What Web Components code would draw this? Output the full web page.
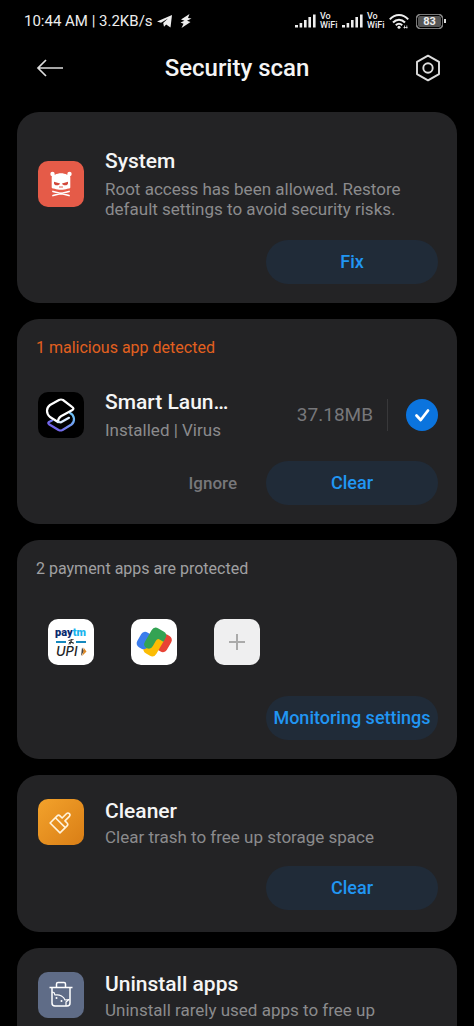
<!DOCTYPE html>
<html lang="en">
<head>
<meta charset="utf-8">
<meta name="viewport" content="width=device-width, initial-scale=1">
<title>Security scan</title>
<style>
    html, body {
        margin: 0;
        background: #000;
    }

    body {
        font-family: Roboto, "Noto Sans", sans-serif;
        color: #f5f5f5;
        --card: #232325;
        --muted: #8b8b8d;
        --dim: #77777a;
        --accent: #2196f3;
        --pill: #202b38;
        --warn: #e2601f;
    }
</style>
</head>
<body>

<security-app>
    <status-bar slot="top" time="10:44 AM" speed="3.2KB/s" battery="83"></status-bar>
    <page-header slot="top">Security scan</page-header>

    <scan-card class="roomy">
        <scan-item name="System">
            <app-icon slot="icon" name="root"></app-icon>
            Root access has been allowed. Restore default settings to avoid security risks.
        </scan-item>
        <pill-button slot="actions">Fix</pill-button>
    </scan-card>

    <scan-card heading="1 malicious app detected" class="warn">
        <scan-item name="Smart Laun…">
            <app-icon slot="icon" name="launcher"></app-icon>
            Installed | Virus
            <size-check slot="end" size="37.18MB"></size-check>
        </scan-item>
        <pill-button slot="actions" plain>Ignore</pill-button>
        <pill-button slot="actions">Clear</pill-button>
    </scan-card>

    <scan-card heading="2 payment apps are protected">
        <app-row>
            <app-icon name="paytm"></app-icon>
            <app-icon name="gpay"></app-icon>
            <app-icon name="add"></app-icon>
        </app-row>
        <pill-button slot="actions">Monitoring settings</pill-button>
    </scan-card>

    <scan-card class="compact">
        <scan-item name="Cleaner" compact>
            <app-icon slot="icon" name="cleaner"></app-icon>
            Clear trash to free up storage space
        </scan-item>
        <pill-button slot="actions">Clear</pill-button>
    </scan-card>

    <scan-card class="compact">
        <scan-item name="Uninstall apps" compact>
            <app-icon slot="icon" name="uninstall"></app-icon>
            Uninstall rarely used apps to free up
        </scan-item>
    </scan-card>
</security-app>

<script>
// attach an open root and fill it from a template
function render(el, html) {
    const template = document.createElement('template');
    template.innerHTML = html;
    el.attachShadow({mode: 'open'});
    el.shadowRoot.appendChild(template.content.cloneNode(true));
}

class SecurityApp extends HTMLElement {
    constructor() {
        super();
        render(this, `
            <style>
                :host {
                    display: flex;
                    flex-direction: column;
                    height: 100vh;
                }

                main {
                    flex: 1;
                    min-height: 0;
                    overflow-y: auto;
                    scrollbar-width: none;
                    display: flex;
                    flex-direction: column;
                    gap: 16px;
                    padding: 0 17px;
                }
            </style>
            <slot name="top"></slot>
            <main><slot></slot></main>
        `);
    }
}

const signal = `
    <svg width="21" height="14" viewBox="0 0 21 14" fill="#eee">
        <rect x="0" y="11" width="3" height="2.5"/>
        <rect x="4.6" y="9" width="2.6" height="4.5"/>
        <rect x="9" y="6" width="2.6" height="7.5"/>
        <rect x="13.4" y="3" width="2.6" height="10.5"/>
        <rect x="18" y="0.5" width="2.6" height="13"/>
    </svg>
    <span class="vo"><span>Vo</span><span>WiFi</span></span>
`;

class StatusBar extends HTMLElement {
    constructor() {
        super();
        render(this, `
            <style>
                :host {
                    display: flex;
                    align-items: center;
                    justify-content: space-between;
                    height: 42px;
                    padding: 0 28px 0 24px;
                    font-size: 15px;
                    line-height: 20px;
                    color: #eee;
                }

                div {
                    display: flex;
                    align-items: center;
                }

                .left { gap: 8px; }
                .right { gap: 4px; }
                #clock { margin-right: -4px; }

                .vo {
                    display: flex;
                    flex-direction: column;
                    width: 18px;
                    font-size: 9px;
                    line-height: 9px;
                    font-weight: 500;
                }

                .wifi { margin-right: 3px; }

                #battery {
                    box-sizing: border-box;
                    width: 27px;
                    height: 15px;
                    padding: 1px;
                    border: 1px solid #eee;
                    outline: 1px solid #777;
                    outline-offset: -1px;
                    border-radius: 4px;
                    background: #555 content-box;
                    font-size: 11px;
                    line-height: 12px;
                    font-weight: 700;
                    text-align: center;
                }

                .cap {
                    width: 2px;
                    height: 4px;
                    margin-left: -3px;
                    background: #ddd;
                }
            </style>
            <div class="left">
                <span id="clock"></span>
                <svg width="15" height="13" viewBox="0 0 15 13" fill="#eee">
                    <path d="M0 6.500 15 0l-1.500 12.500-4.300-3.100-2.200 2.300-.8-3.700L11 3.500 4 7.700z"/>
                </svg>
                <svg width="12" height="14" viewBox="0 0 12 14" fill="#eee">
                    <path d="M9.500 0 1 5.500l3.500 1.300L.5 8.500l3 1.300L1.500 14l9-6-3.500-1.200 4.500-2.300-3.500-.5z"/>
                </svg>
            </div>
            <div class="right">
                ${signal}${signal}
                <svg class="wifi" width="20" height="15" viewBox="0 0 20 15" fill="none" stroke="#eee" stroke-width="2">
                    <path d="M.8 5.400C6-.4 14-.4 19.200 5.400M4 8.500c3.500-3.800 8.500-3.800 12 0M6.800 11.300c2-2 4.400-2 6.400 0"/>
                    <circle cx="10" cy="13.300" r="1.500" fill="#eee" stroke="none"/>
                    <path d="M14.500 13.500h4M15.500 11.500v3M17.800 11.500v3" stroke-width=".8"/>
                </svg>
                <span id="battery"></span>
                <span class="cap"></span>
            </div>
        `);
    }

    connectedCallback() {
        this.shadowRoot.querySelector('#clock').textContent =
            this.getAttribute('time') + ' | ' + this.getAttribute('speed');
        this.shadowRoot.querySelector('#battery').textContent = this.getAttribute('battery');
    }
}

class PageHeader extends HTMLElement {
    constructor() {
        super();
        render(this, `
            <style>
                :host {
                    display: grid;
                    grid-template-columns: 32px 1fr 32px;
                    align-items: center;
                    height: 52px;
                    padding: 0 32px 18px;
                }

                h1 {
                    margin: 0;
                    font-size: 24px;
                    line-height: 32px;
                    font-weight: 500;
                    text-align: center;
                }

                button {
                    display: block;
                    padding: 0;
                    border: 0;
                    background: none;
                    cursor: pointer;
                }

                svg { display: block; }
            </style>
            <button aria-label="Back">
                <svg width="32" height="28" viewBox="-4 0 32 28" fill="none" stroke="#ddd" stroke-width="1.700">
                    <path d="M27 14H2M10 6l-8 8 8 8"/>
                </svg>
            </button>
            <h1><slot></slot></h1>
            <button aria-label="Settings">
                <svg width="32" height="28" viewBox="-4 0 32 28" fill="none" stroke="#ddd" stroke-width="1.900" stroke-linejoin="round">
                    <path d="M14 1.700 25 7.900v12.200l-11 6.200-11-6.200V7.900z"/>
                    <circle cx="14" cy="14" r="4.700"/>
                </svg>
            </button>
        `);
    }
}

class ScanCard extends HTMLElement {
    constructor() {
        super();
        render(this, `
            <style>
                :host {
                    display: flex;
                    flex-direction: column;
                    flex-shrink: 0;
                    box-sizing: border-box;
                    border-radius: 22px;
                    background: var(--card);
                    padding: 19px;
                }

                :host(.roomy) { padding-top: 37px; }
                :host(.compact) { padding: 24px 19px 22px; }

                h2 {
                    margin: 0 0 32px;
                    font-size: 16px;
                    line-height: 20px;
                    font-weight: 400;
                    color: #a0a0a2;
                }

                h2:empty { display: none; }
                :host(.warn) h2 { color: var(--warn); }

                footer {
                    display: flex;
                    justify-content: flex-end;
                    gap: 8px;
                    padding-top: 21px;
                }

                :host(.compact) footer { padding-top: 19px; }
            </style>
            <h2></h2>
            <slot></slot>
            <footer><slot name="actions"></slot></footer>
        `);
    }

    connectedCallback() {
        this.shadowRoot.querySelector('h2').textContent = this.getAttribute('heading') || '';
    }
}

class ScanItem extends HTMLElement {
    constructor() {
        super();
        render(this, `
            <style>
                :host {
                    display: flex;
                    align-items: center;
                    gap: 21px;
                    padding-left: 2px;
                }

                :host([compact]) { align-items: flex-start; }

                .text {
                    flex: 1;
                    display: flex;
                    flex-direction: column;
                    gap: 6px;
                }

                :host([compact]) .text { gap: 4px; }

                h3 {
                    margin: 0;
                    font-size: 21px;
                    line-height: 24px;
                    font-weight: 500;
                }

                p {
                    margin: 0;
                    font-size: 17px;
                    line-height: 20px;
                    color: var(--muted);
                }
            </style>
            <slot name="icon"></slot>
            <div class="text">
                <h3></h3>
                <p><slot></slot></p>
            </div>
            <slot name="end"></slot>
        `);
    }

    connectedCallback() {
        this.shadowRoot.querySelector('h3').textContent = this.getAttribute('name');
    }
}

class SizeCheck extends HTMLElement {
    constructor() {
        super();
        render(this, `
            <style>
                :host { display: block; }

                label {
                    display: flex;
                    align-items: center;
                    font-size: 19px;
                    line-height: 24px;
                    color: var(--dim);
                }

                .tick {
                    display: grid;
                    margin-left: 14px;
                    padding-left: 18px;
                    border-left: 1px solid #38383a;
                }

                input, svg {
                    grid-area: 1 / 1;
                    width: 32px;
                    height: 32px;
                    margin: 0;
                }

                input {
                    appearance: none;
                    border-radius: 50%;
                    background: #444;
                }

                input:checked { background: #0b74de; }
                input:not(:checked) + svg { visibility: hidden; }
                svg { pointer-events: none; }
            </style>
            <label>
                <span id="size"></span>
                <span class="tick">
                    <input type="checkbox" checked>
                    <svg viewBox="0 0 32 32" fill="none" stroke="#fff" stroke-width="2.800" stroke-linecap="round" stroke-linejoin="round">
                        <path d="M10.500 16.500l4.200 4.500 7.300-9.500"/>
                    </svg>
                </span>
            </label>
        `);
    }

    connectedCallback() {
        this.shadowRoot.querySelector('#size').textContent = this.getAttribute('size');
    }
}

class AppRow extends HTMLElement {
    constructor() {
        super();
        render(this, `
            <style>
                :host {
                    display: flex;
                    gap: 37px;
                    padding: 8px 12px 10px;
                }
            </style>
            <slot></slot>
        `);
    }
}

class PillButton extends HTMLElement {
    constructor() {
        super();
        render(this, `
            <style>
                :host { display: block; }

                button {
                    width: 172px;
                    height: 44px;
                    padding: 0;
                    border: 0;
                    border-radius: 22px;
                    background: var(--pill);
                    color: var(--accent);
                    font-family: inherit;
                    font-size: 18px;
                    line-height: 24px;
                    font-weight: 500;
                    white-space: nowrap;
                    cursor: pointer;
                }

                :host([plain]) button {
                    width: auto;
                    padding: 0 21px;
                    background: none;
                    color: var(--dim);
                    font-size: 17px;
                }
            </style>
            <button><slot></slot></button>
        `);
    }
}

// every tile is drawn on a 46 x 46 grid
const icons = {
    root: `
        <rect width="46" height="46" rx="10" fill="#e55b48"/>
        <g fill="#fff">
            <circle cx="14.500" cy="13" r="2.200"/>
            <circle cx="31.500" cy="13" r="2.200"/>
            <path d="M14 13l3 .8c3.500-2 8.500-2 12 0l3-.8.3 4v9.500q0 1-1.500 1l-1.500.2c-3.500 1.300-9 1.300-12.600 0l-1.500-.2q-1.500 0-1.500-1V17z"/>
        </g>
        <path d="M15 30.500l16 4M31 30.500l-16 4" stroke="#fff" stroke-width="1.800" stroke-linecap="round"/>
        <path d="M16 20.700l6 1.800c-.3 2.200-5.500 2.700-6 0zM30 20.700l-6 1.800c.3 2.200 5.500 2.700 6 0z" fill="#d2473a"/>
        <path d="M21 26h4" stroke="#e55b48"/>
    `,
    launcher: `
        <defs>
            <linearGradient id="low" x1="0" y1="1" x2="1" y2="0">
                <stop offset=".1" stop-color="#7357e8"/>
                <stop offset=".9" stop-color="#6fc0f5"/>
            </linearGradient>
        </defs>
        <rect width="46" height="46" rx="10" fill="#000"/>
        <g fill="none" stroke-width="2.200" stroke-linecap="round" stroke-linejoin="round">
            <path d="M14 28.500l-3 1.500q-1.500 1 0 2.200l9.500 5.800q2 1 4 0l9-5.500c4-3 3-9.500-1.500-11.500" stroke="url(#low)"/>
            <path d="M21 8l-9 5c-4 3-4 8.500 0 12l8 5c0-2.500.7-4.300 3-5.700l11-6c2-1.300 1.800-2.300 0-3.500L25 8q-2-1-4 0z" stroke="#fff"/>
            <path d="M20 30l3 .3 8-4.500" stroke="#dcecff"/>
        </g>
    `,
    paytm: `
        <rect width="46" height="46" rx="10" fill="#fff"/>
        <text x="7" y="17" font-family="Roboto, sans-serif" font-size="11" font-weight="900" fill="#0b2a6f">pay<tspan fill="#18b4ee">tm</tspan></text>
        <path d="M8 23h10M28 23h10" stroke="#1688bd" stroke-width="2"/>
        <path d="M20.500 21.500l5-1M21 23.500h4.500M23.500 20l-1.500 5.500M20.500 25l3-2.500 2 2.500" stroke="#333" fill="none"/>
        <text x="8" y="37" font-family="Inter, sans-serif" font-size="13" font-style="italic" font-weight="500" fill="#222">UPI</text>
        <path d="M34 28.500l2 3.500-3 5z" fill="#444"/>
        <path d="M35.500 28.500l3 4-4.500 4.500 1.500-4.500z" fill="#e08b27"/>
    `,
    gpay: `
        <rect width="46" height="46" rx="10" fill="#fff"/>
        <g transform="translate(23 23) rotate(30)">
            <rect x="3" y="-13" width="12" height="18" rx="4.500" fill="#e84335"/>
            <path d="M-6 5H0V-6H8V9q0 5-5 5H-1q-5 0-5-5z" fill="#fbbc04"/>
            <rect x="-15" y="-5" width="12" height="17" rx="4.500" fill="#3b7ded"/>
            <path d="M-8-9q0-5 5-5H3q5 0 5 5V-5H4q-3 0-3 3V4q0 5-4.500 5t-4.500-5z" fill="#34a353"/>
        </g>
    `,
    add: `
        <rect width="46" height="46" rx="10" fill="#efeff0"/>
        <path d="M15 23h16M23 15v16" stroke="#aaa" stroke-width="2"/>
    `,
    cleaner: `
        <defs>
            <linearGradient id="warm" x1="0" y1="0" x2="1" y2="1">
                <stop offset="0" stop-color="#f3a22b"/>
                <stop offset="1" stop-color="#d97e16"/>
            </linearGradient>
        </defs>
        <rect width="46" height="46" rx="10" fill="url(#warm)"/>
        <g transform="rotate(45 22 24)" fill="none" stroke="#fff3dc" stroke-width="1.600" stroke-linejoin="round">
            <path d="M15 31V21q0-2 2-2h3v-6q0-2.200 2-2.200t2 2.200v6h3q2 0 2 2v10z"/>
            <path d="M15 23.500h14"/>
        </g>
    `,
    uninstall: `
        <rect width="46" height="46" rx="10" fill="#5f6c87"/>
        <g fill="none" stroke="#fff" stroke-width="1.500" stroke-linejoin="round">
            <path d="M11.500 15.500h23M18.500 15v-3q0-1.500 1.500-1.500h6q1.500 0 1.500 1.500v3M14 16v15q0 3 3 3h12q3 0 3-3V16"/>
            <path d="M14 20l2 .5 1 2.500c5-1 9 2 10 5l4-.5-3 2.500v4" stroke-width="1.200"/>
        </g>
        <circle cx="18.500" cy="26" r="1" fill="#fff"/>
        <circle cx="23.500" cy="29" r="1" fill="#fff"/>
    `,
};

class AppIcon extends HTMLElement {
    constructor() {
        super();
        render(this, `
            <style>
                :host {
                    display: block;
                    flex: none;
                    width: 46px;
                    height: 46px;
                }

                svg { display: block; }
            </style>
            <svg width="46" height="46" viewBox="0 0 46 46"></svg>
        `);
    }

    connectedCallback() {
        this.shadowRoot.querySelector('svg').innerHTML = icons[this.getAttribute('name')];
    }
}

customElements.define('security-app', SecurityApp);
customElements.define('status-bar', StatusBar);
customElements.define('page-header', PageHeader);
customElements.define('scan-card', ScanCard);
customElements.define('scan-item', ScanItem);
customElements.define('size-check', SizeCheck);
customElements.define('app-row', AppRow);
customElements.define('pill-button', PillButton);
customElements.define('app-icon', AppIcon);
</script>
</body>
</html>
